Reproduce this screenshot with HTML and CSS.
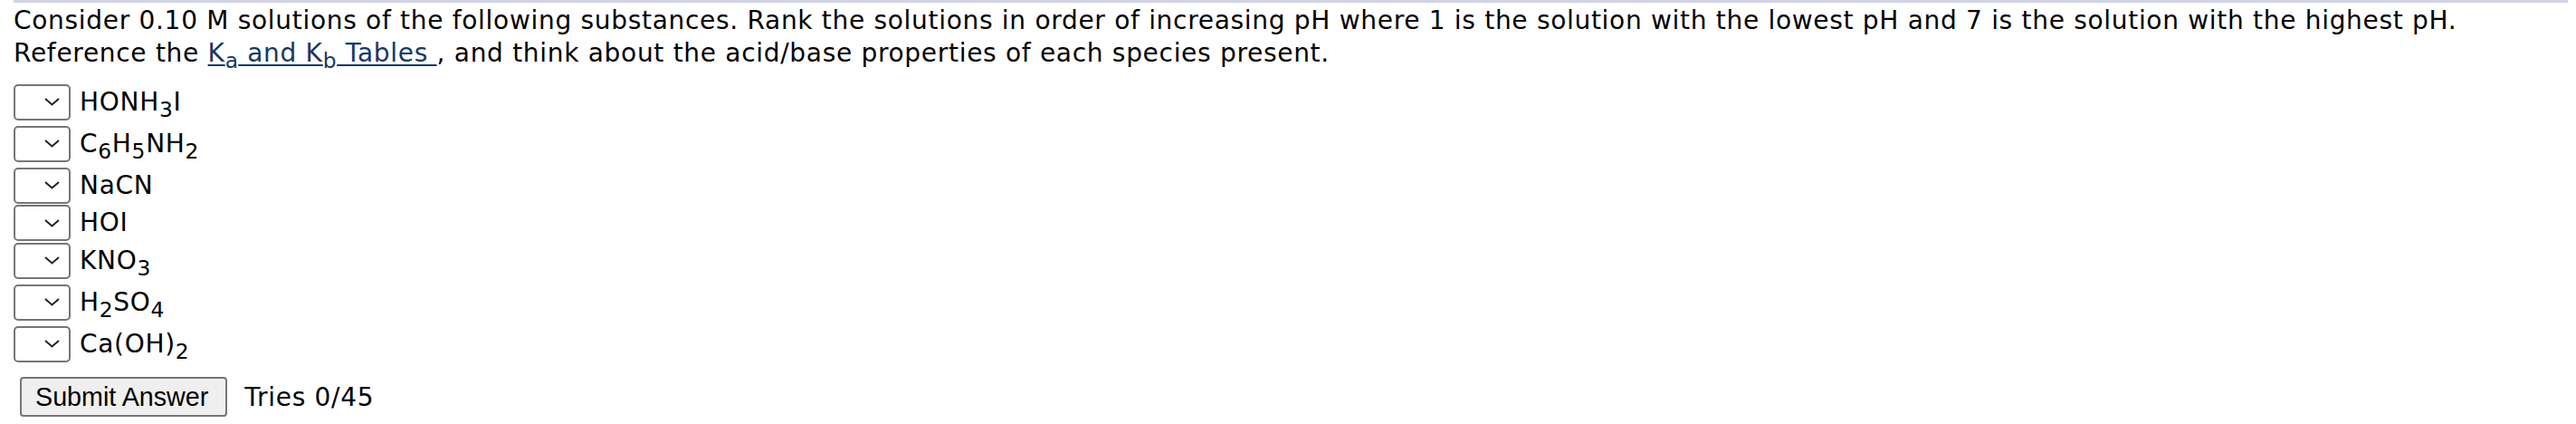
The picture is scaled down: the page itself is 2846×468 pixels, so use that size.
FILE: index.html
```html
<!DOCTYPE html>
<html lang="en">
<head>
<meta charset="utf-8">
<title>Rank solutions by pH</title>
<link rel="stylesheet" href="styles.css">
</head>
<body>
<div class="page">
  <div class="question">
    <p class="prompt">Consider 0.10 M solutions of the following substances. Rank the solutions in order of increasing pH where 1 is the solution with the lowest pH and 7 is the solution with the highest pH.<br>Reference the <a class="ref-link" href="#">K<sub>a</sub> and K<sub>b</sub> Tables </a>, and think about the acid/base properties of each species present.</p>
    <div class="ranks">
      <div class="row"><span class="select"><svg class="chev" width="17" height="9" viewBox="0 0 17 9"><polyline points="1,1 8.5,7.5 16,1"/></svg></span><span class="label">HONH<sub>3</sub>I</span></div>
      <div class="row"><span class="select"><svg class="chev" width="17" height="9" viewBox="0 0 17 9"><polyline points="1,1 8.5,7.5 16,1"/></svg></span><span class="label">C<sub>6</sub>H<sub>5</sub>NH<sub>2</sub></span></div>
      <div class="row"><span class="select"><svg class="chev" width="17" height="9" viewBox="0 0 17 9"><polyline points="1,1 8.5,7.5 16,1"/></svg></span><span class="label">NaCN</span></div>
      <div class="row"><span class="select"><svg class="chev" width="17" height="9" viewBox="0 0 17 9"><polyline points="1,1 8.5,7.5 16,1"/></svg></span><span class="label">HOI</span></div>
      <div class="row"><span class="select"><svg class="chev" width="17" height="9" viewBox="0 0 17 9"><polyline points="1,1 8.5,7.5 16,1"/></svg></span><span class="label">KNO<sub>3</sub></span></div>
      <div class="row"><span class="select"><svg class="chev" width="17" height="9" viewBox="0 0 17 9"><polyline points="1,1 8.5,7.5 16,1"/></svg></span><span class="label">H<sub>2</sub>SO<sub>4</sub></span></div>
      <div class="row"><span class="select"><svg class="chev" width="17" height="9" viewBox="0 0 17 9"><polyline points="1,1 8.5,7.5 16,1"/></svg></span><span class="label">Ca(OH)<sub>2</sub></span></div>
    </div>
    <div class="actions">
      <button class="submit" type="button">Submit Answer</button>
      <span class="tries">Tries 0/45</span>
    </div>
  </div>
</div>
</body>
</html>
```

FILE: styles.css
```css
html, body {
  margin: 0;
  padding: 0;
  background: #ffffff;
}

.page {
  padding: 0 9px 0 15px;
  font-family: "DejaVu Sans", Verdana, sans-serif;
  font-size: 28px;
  letter-spacing: 0.7px;
  line-height: 36px;
  color: #000000;
}

.question {
  border-top: 3px solid #d0d2e6;
  padding-top: 2px;
}

.prompt {
  margin: 0;
}

.prompt sub,
.label sub {
  line-height: 33px;
}

.ref-link {
  color: #14386b;
  text-decoration: underline;
  text-decoration-thickness: 2px;
  text-underline-offset: 3px;
}

.ranks {
  margin-top: 9px;
  display: flex;
  flex-direction: column;
}

.row {
  display: flex;
  align-items: flex-start;
  margin-bottom: 1.5px;
}

.select {
  box-sizing: border-box;
  width: 63px;
  height: 40px;
  border: 2px solid #767676;
  border-radius: 5px;
  background: #ffffff;
  display: flex;
  align-items: center;
  justify-content: flex-end;
  padding-right: 10px;
  flex: none;
}

.chev {
  display: block;
  fill: none;
  stroke: #222222;
  stroke-width: 2;
}

.label {
  margin-left: 10px;
  margin-top: 2px;
}

.actions {
  display: flex;
  align-items: baseline;
  margin-top: 10px;
}

.submit {
  margin-left: 7px;
  font-family: "Liberation Sans", Arial, sans-serif;
  font-size: 28.7px;
  letter-spacing: 0;
  line-height: 32px;
  padding: 4px 19px 4px 15px;
  border: 2px solid #767676;
  border-radius: 4px;
  background: #efefef;
  color: #000000;
}

.tries {
  margin-left: 19px;
}
```
